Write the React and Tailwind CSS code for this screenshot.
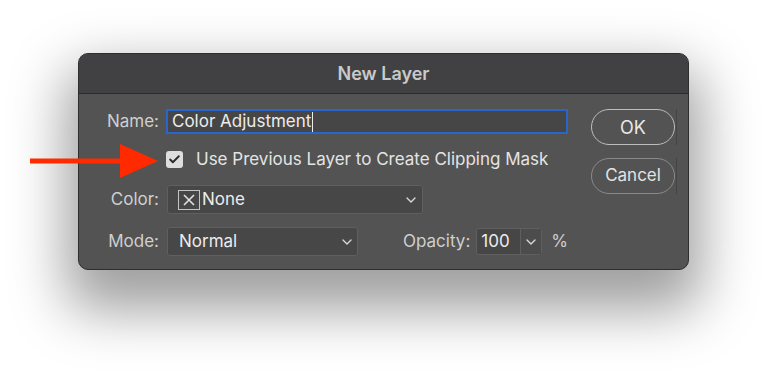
import { Check } from "lucide-react";

function Chevron({ className = "" }) {
  return (
    <svg width="10" height="6" viewBox="0 0 10 6" className={className}>
      <path d="M1 1l4 4 4-4" fill="none" stroke="#d8d8d8" strokeWidth="1.4" strokeLinecap="round" strokeLinejoin="round" />
    </svg>
  );
}

function Label({ children }) {
  return <div className="w-[80px] text-right text-[17px] text-[#cfcfcf]">{children}</div>;
}

export default function App() {
  return (
    <div
      className="relative w-[768px] h-[375px] bg-white overflow-hidden"
      style={{ fontFamily: "Inter, 'Liberation Sans', sans-serif" }}
    >
      <div className="ml-[78px] pt-[53px] w-[611px]">
        <div className="rounded-[10px] border border-[#2e2e2e] bg-[#535353] shadow-[0_28px_55px_12px_rgba(0,0,0,0.38)] overflow-hidden">
          <div className="h-[40px] flex items-center justify-center bg-[#414143] border-b border-[#2c2c2c] text-[18px] font-semibold text-[#c9c9c9]">
            New Layer
          </div>

          <div className="flex pt-[15px] pb-[13px] pr-[13px]">
            <div className="flex flex-col">
              <div className="flex items-center gap-[7px] h-[25px]">
                <Label>Name:</Label>
                <div className="w-[402px] h-[25px] border-2 border-[#2a66c9] bg-[#464646] flex items-center pl-[4px] text-[17px] text-[#ececec]">
                  Color Adjustment
                  <span className="w-px h-[20px] bg-[#ececec] ml-px" />
                </div>
              </div>

              <div className="flex items-center mt-[17px] h-[17px] pl-[87px]">
                <div className="w-[17px] h-[17px] rounded-[3px] bg-[#dedede] flex items-center justify-center">
                  <Check size={13} strokeWidth={3.5} color="#2c2c2c" />
                </div>
                <span className="ml-[13px] text-[17px] text-[#e4e4e4]">
                  Use Previous Layer to Create Clipping Mask
                </span>
              </div>

              <div className="flex items-center gap-[8px] mt-[17px] h-[29px]">
                <Label>Color:</Label>
                <div className="w-[256px] h-[29px] rounded-[3px] border border-[#5f5f5f] bg-[#474747] flex items-center pl-[10px] pr-[6px]">
                  <svg width="22" height="20" viewBox="0 0 22 20">
                    <rect x="0.5" y="0.5" width="21" height="19" fill="none" stroke="#c4c4c4" strokeWidth="1" />
                    <path d="M6 5l10 10M16 5L6 15" stroke="#e0e0e0" strokeWidth="1.6" />
                  </svg>
                  <span className="ml-[2px] text-[17px] text-[#ececec]">None</span>
                  <Chevron className="ml-auto" />
                </div>
              </div>

              <div className="flex items-center mt-[13px] h-[29px]">
                <div className="flex items-center gap-[8px]">
                  <Label>Mode:</Label>
                  <div className="w-[191px] h-[29px] rounded-[3px] border border-[#5f5f5f] bg-[#474747] flex items-center pl-[11px] pr-[5px]">
                    <span className="text-[17px] text-[#ececec]">Normal</span>
                    <Chevron className="ml-auto" />
                  </div>
                </div>
                <span className="ml-[45px] text-[17px] text-[#cfcfcf]">Opacity:</span>
                <div className="ml-[6px] w-[66px] h-[27px] rounded-[3px] border border-[#5f5f5f] bg-[#464646] flex">
                  <div className="w-[44px] flex items-center pl-[4px] text-[17px] text-[#ececec] border-r border-[#5f5f5f]">
                    100
                  </div>
                  <div className="flex-1 flex items-center justify-center bg-[#4c4c4c]">
                    <Chevron />
                  </div>
                </div>
                <span className="ml-[9px] text-[17px] text-[#cfcfcf]">%</span>
              </div>
            </div>

            <div className="ml-[23px] flex flex-col gap-[13px]">
              <div className="flex items-stretch">
                <button className="w-[84px] h-[36px] rounded-full border-[1.5px] border-[#bdbdbd] text-[18px] text-[#e8e8e8]">
                  OK
                </button>
                <div className="ml-px w-px bg-[#444444]" />
              </div>
              <div className="flex items-stretch">
                <button className="w-[84px] h-[36px] rounded-full border border-[#8a8a8a] text-[17px] text-[#e3e3e3]">
                  Cancel
                </button>
                <div className="ml-px w-px bg-[#444444]" />
              </div>
            </div>
          </div>
        </div>
      </div>

      <svg className="absolute left-[28px] top-[140px]" width="134" height="42" viewBox="28 140 134 42">
        <rect x="30" y="158.5" width="92" height="5" fill="#ff2a00" />
        <polygon points="120,144 158,161 120,178" fill="#ff2a00" />
      </svg>
    </div>
  );
}
